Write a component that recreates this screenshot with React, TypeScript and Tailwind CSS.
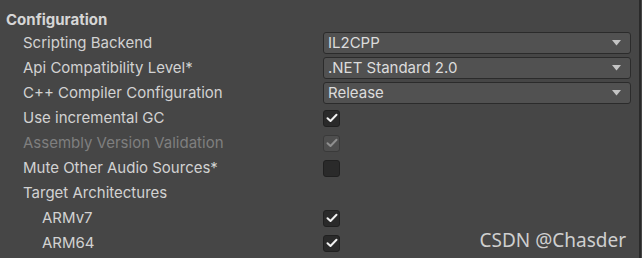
import React from "react";

const Check = ({ color }: { color: string }) => (
  <svg width="12" height="10" viewBox="0 0 12 10" fill="none">
    <path d="M1.5 5.2 L4.5 8 L10.5 1.8" stroke={color} strokeWidth="2" strokeLinecap="round" strokeLinejoin="round" />
  </svg>
);

const Dropdown = ({ value }: { value: string }) => (
  <div className="flex h-[22px] w-[308px] items-center justify-between rounded-[3px] border border-[#2b2b2b] bg-[#515151] pl-[4px] pr-[9px]">
    <span className="text-[15px] text-[#dcdcdc]">{value}</span>
    <svg width="9" height="6" viewBox="0 0 9 6">
      <path d="M0 0 H9 L4.5 5.5 Z" fill="#c4c4c4" />
    </svg>
  </div>
);

const Checkbox = ({ checked, disabled }: { checked?: boolean; disabled?: boolean }) => (
  <div
    className={
      disabled
        ? "flex h-[17px] w-[17px] items-center justify-center rounded-[3px] border border-[#3a3a3a] bg-[#4e4e4e]"
        : "flex h-[17px] w-[17px] items-center justify-center rounded-[3px] border border-[#202020] bg-[#2a2a2a]"
    }
  >
    {checked ? <Check color={disabled ? "#8f8f8f" : "#f0f0f0"} /> : null}
  </div>
);

const Row = ({
  label,
  children,
  indent,
  disabled,
}: {
  label: string;
  children?: React.ReactNode;
  indent?: boolean;
  disabled?: boolean;
}) => (
  <div className="flex h-[22px] items-center">
    <div
      className={
        (indent ? "pl-[42px] " : "pl-[23px] ") +
        "w-[323px] shrink-0 text-[15px] " +
        (disabled ? "text-[#7f7f7f]" : "text-[#d2d2d2]")
      }
    >
      {label}
    </div>
    <div className="flex items-center">{children}</div>
  </div>
);

export default function App() {
  return (
    <div
      className="relative h-[258px] w-[642px] overflow-hidden bg-[#464646]"
      style={{ fontFamily: "Inter, 'Noto Sans', sans-serif" }}
    >
      <div className="absolute right-[1px] top-0 h-full w-[2px] bg-[#2a2a2a]" />
      <div className="flex flex-col gap-[3px] pt-[12px]">
        <div className="flex h-[17px] items-center pl-[6px] text-[15px] font-bold text-[#d6d6d6]">
          Configuration
        </div>
        <Row label="Scripting Backend">
          <Dropdown value="IL2CPP" />
        </Row>
        <Row label="Api Compatibility Level*">
          <Dropdown value=".NET Standard 2.0" />
        </Row>
        <Row label="C++ Compiler Configuration">
          <Dropdown value="Release" />
        </Row>
        <Row label="Use incremental GC">
          <Checkbox checked />
        </Row>
        <Row label="Assembly Version Validation" disabled>
          <Checkbox checked disabled />
        </Row>
        <Row label="Mute Other Audio Sources*">
          <Checkbox />
        </Row>
        <Row label="Target Architectures" />
        <Row label="ARMv7" indent>
          <Checkbox checked />
        </Row>
        <Row label="ARM64" indent>
          <Checkbox checked />
        </Row>
      </div>
      <div
        className="absolute bottom-[4px] right-[16px] text-[19px] text-[#cfcfcf]"
        style={{ fontFamily: "'Noto Sans', 'DejaVu Sans', sans-serif" }}
      >
        CSDN @Chasder
      </div>
    </div>
  );
}
